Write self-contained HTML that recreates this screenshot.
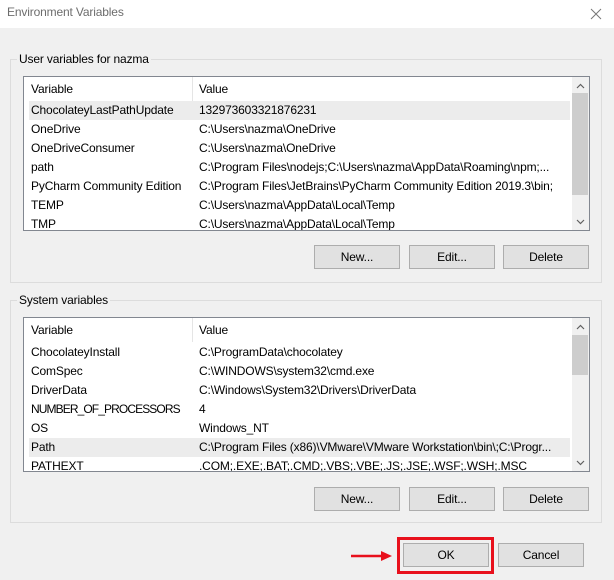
<!DOCTYPE html>
<html><head><meta charset="utf-8"><style>
*{margin:0;padding:0;box-sizing:border-box}
body{width:614px;height:580px;background:#f0f0f0;font-family:"Liberation Sans",sans-serif;font-size:12px;color:#000;position:relative;overflow:hidden;letter-spacing:-0.15px}
.a{position:absolute}
.title{left:0;top:0;width:614px;height:28px;background:#fff}
.grp{border:1px solid #dcdcdc}
.lbl{background:#f0f0f0;padding:0 2px;line-height:14px}
.list{background:#fff;border:1px solid #828790;overflow:hidden}
.row{position:absolute;left:5px;width:541px;height:19px;line-height:19px;white-space:nowrap}
.row span{position:absolute}
.row .v{left:2px}.row .w{left:170px}
.sel{background:#ececec}
.hdr{position:absolute;left:0;top:0;width:547px;height:24px;line-height:24px}
.hdr span{position:absolute}
.div{position:absolute;left:168px;top:0;width:1px;height:24px;background:#e5e5e5}
.sb{position:absolute;right:0;top:0;width:17px;height:100%;background:#f0f0f0}
.th{position:absolute;left:0;width:16px;background:#cdcdcd}
.ar{position:absolute;left:4px}
.btn{background:#e1e1e1;border:1px solid #adadad;text-align:center;line-height:22px}
</style></head><body>
<div class="a title"></div>
<div class="a" style="left:7px;top:5px;color:#6d6d6d;font-size:12px">Environment Variables</div>
<svg class="a" style="left:590px;top:8px" width="12" height="12"><path d="M1 1L11 11M11 1L1 11" stroke="#777" stroke-width="1"/></svg>

<div class="a grp" style="left:10px;top:59px;width:592px;height:224px"></div>
<div class="a lbl" style="left:17px;top:52px">User variables for nazma</div>
<div class="a list" style="left:23px;top:76px;width:567px;height:155px">
 <div class="hdr"><span style="left:7px">Variable</span><span style="left:175px">Value</span><div class="div"></div></div>
 <div class="row sel" style="top:24px"><span class="v">ChocolateyLastPathUpdate</span><span class="w">132973603321876231</span></div>
 <div class="row" style="top:43px"><span class="v">OneDrive</span><span class="w">C:\Users\nazma\OneDrive</span></div>
 <div class="row" style="top:62px"><span class="v">OneDriveConsumer</span><span class="w">C:\Users\nazma\OneDrive</span></div>
 <div class="row" style="top:81px"><span class="v">path</span><span class="w">C:\Program Files\nodejs;C:\Users\nazma\AppData\Roaming\npm;...</span></div>
 <div class="row" style="top:100px"><span class="v">PyCharm Community Edition</span><span class="w">C:\Program Files\JetBrains\PyCharm Community Edition 2019.3\bin;</span></div>
 <div class="row" style="top:119px"><span class="v">TEMP</span><span class="w">C:\Users\nazma\AppData\Local\Temp</span></div>
 <div class="row" style="top:138px"><span class="v">TMP</span><span class="w">C:\Users\nazma\AppData\Local\Temp</span></div>
 <div class="sb"><svg class="ar" style="top:6px" width="9" height="6"><path d="M1 5L4.5 1.5L8 5" fill="none" stroke="#606060" stroke-width="1.2"/></svg><div class="th" style="top:16px;height:102px"></div><svg class="ar" style="top:142px" width="9" height="6"><path d="M1 1L4.5 4.5L8 1" fill="none" stroke="#606060" stroke-width="1.2"/></svg></div>
</div>
<div class="a btn" style="left:314px;top:245px;width:86px;height:24px">New...</div>
<div class="a btn" style="left:409px;top:245px;width:86px;height:24px">Edit...</div>
<div class="a btn" style="left:503px;top:245px;width:86px;height:24px">Delete</div>

<div class="a grp" style="left:10px;top:300px;width:592px;height:223px"></div>
<div class="a lbl" style="left:17px;top:293px">System variables</div>
<div class="a list" style="left:23px;top:317px;width:567px;height:155px">
 <div class="hdr"><span style="left:7px">Variable</span><span style="left:175px">Value</span><div class="div"></div></div>
 <div class="row" style="top:25px"><span class="v">ChocolateyInstall</span><span class="w">C:\ProgramData\chocolatey</span></div>
 <div class="row" style="top:44px"><span class="v">ComSpec</span><span class="w">C:\WINDOWS\system32\cmd.exe</span></div>
 <div class="row" style="top:63px"><span class="v">DriverData</span><span class="w">C:\Windows\System32\Drivers\DriverData</span></div>
 <div class="row" style="top:82px"><span class="v" style="letter-spacing:-0.9px">NUMBER_OF_PROCESSORS</span><span class="w">4</span></div>
 <div class="row" style="top:101px"><span class="v">OS</span><span class="w">Windows_NT</span></div>
 <div class="row sel" style="top:120px"><span class="v">Path</span><span class="w">C:\Program Files (x86)\VMware\VMware Workstation\bin\;C:\Progr...</span></div>
 <div class="row" style="top:139px"><span class="v">PATHEXT</span><span class="w">.COM;.EXE;.BAT;.CMD;.VBS;.VBE;.JS;.JSE;.WSF;.WSH;.MSC</span></div>
 <div class="sb"><svg class="ar" style="top:6px" width="9" height="6"><path d="M1 5L4.5 1.5L8 5" fill="none" stroke="#606060" stroke-width="1.2"/></svg><div class="th" style="top:17px;height:40px"></div><svg class="ar" style="top:142px" width="9" height="6"><path d="M1 1L4.5 4.5L8 1" fill="none" stroke="#606060" stroke-width="1.2"/></svg></div>
</div>
<div class="a btn" style="left:314px;top:487px;width:86px;height:24px">New...</div>
<div class="a btn" style="left:409px;top:487px;width:86px;height:24px">Edit...</div>
<div class="a btn" style="left:503px;top:487px;width:86px;height:24px">Delete</div>

<div class="a btn" style="left:403px;top:543px;width:86px;height:24px">OK</div>
<div class="a btn" style="left:498px;top:543px;width:86px;height:24px">Cancel</div>
<div class="a" style="left:397px;top:537px;width:97px;height:37px;border:3px solid #e8101c"></div>
<svg class="a" style="left:349px;top:550px" width="44" height="12"><line x1="2" y1="6" x2="34" y2="6" stroke="#e8101c" stroke-width="2.5"/><polygon points="32,1 43,6 32,11" fill="#e8101c"/></svg>
</body></html>
